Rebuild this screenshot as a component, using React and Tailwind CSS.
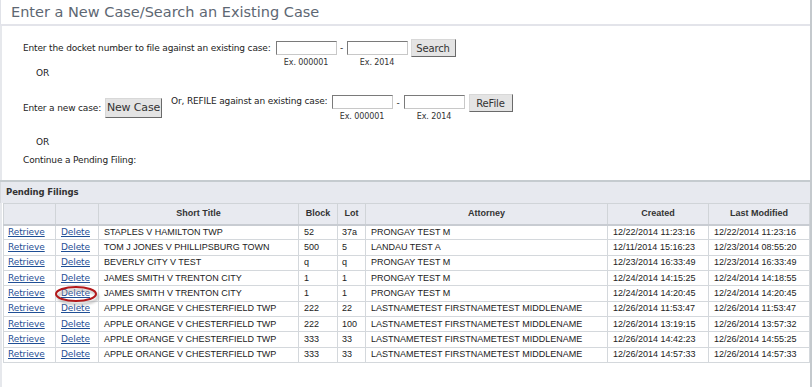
import React from "react";

const rows = [
  ["STAPLES V HAMILTON TWP", "52", "37a", "PRONGAY TEST M", "12/22/2014 11:23:16", "12/22/2014 11:23:16"],
  ["TOM J JONES V PHILLIPSBURG TOWN", "500", "5", "LANDAU TEST A", "12/11/2014 15:16:23", "12/23/2014 08:55:20"],
  ["BEVERLY CITY V TEST", "q", "q", "PRONGAY TEST M", "12/23/2014 16:33:49", "12/23/2014 16:33:49"],
  ["JAMES SMITH V TRENTON CITY", "1", "1", "PRONGAY TEST M", "12/24/2014 14:15:25", "12/24/2014 14:18:55"],
  ["JAMES SMITH V TRENTON CITY", "1", "1", "PRONGAY TEST M", "12/24/2014 14:20:45", "12/24/2014 14:20:45"],
  ["APPLE ORANGE V CHESTERFIELD TWP", "222", "22", "LASTNAMETEST FIRSTNAMETEST MIDDLENAME", "12/26/2014 11:53:47", "12/26/2014 11:53:47"],
  ["APPLE ORANGE V CHESTERFIELD TWP", "222", "100", "LASTNAMETEST FIRSTNAMETEST MIDDLENAME", "12/26/2014 13:19:15", "12/26/2014 13:57:32"],
  ["APPLE ORANGE V CHESTERFIELD TWP", "333", "33", "LASTNAMETEST FIRSTNAMETEST MIDDLENAME", "12/26/2014 14:42:23", "12/26/2014 14:55:25"],
  ["APPLE ORANGE V CHESTERFIELD TWP", "333", "33", "LASTNAMETEST FIRSTNAMETEST MIDDLENAME", "12/26/2014 14:57:33", "12/26/2014 14:57:33"],
];

function Field({ label }) {
  return (
    <div className="flex flex-col items-center">
      <div className="w-[61px] h-[14px] bg-white border border-t-[#7a7a7a] border-l-[#7a7a7a] border-b-[#c8c8c8] border-r-[#c8c8c8]" />
      <div className="mt-[3px] leading-[10px] text-[8px] tracking-[-0.1px] text-[#333]">{label}</div>
    </div>
  );
}

function Btn({ children, cls }) {
  return (
    <div
      className={
        "flex items-center justify-center bg-[#e4e4e4] border border-t-[#d8d8d8] border-l-[#d8d8d8] border-b-[#6a6a6a] border-r-[#6a6a6a] text-[#333] text-[10px] " +
        cls
      }
    >
      {children}
    </div>
  );
}

export default function App() {
  const dv = "font-['DejaVu_Sans',sans-serif]";
  return (
    <div className={"relative w-[812px] h-[387px] bg-white overflow-hidden " + dv}>
      <div className="w-[812px] h-[387px] border-r-2 border-[#c4c9cd] flex flex-col">
        {/* title */}
        <div className="h-[24px] border-l border-[#e0e2e8] pl-[10px] flex items-center text-[14.5px] text-[#5d6773] tracking-[0px] leading-none">
          Enter a New Case/Search an Existing Case
        </div>
        <div className="h-[2px] bg-[#e3e4ea]" />
        {/* form */}
        <div className="h-[154px] border-l-2 border-[#e6e8ec] pl-[21px] text-[9px] tracking-[-0.15px] text-[#222] flex flex-col">
          <div className="mt-[13px] flex items-start">
            <span className="leading-[18px]">Enter the docket number to file against an existing case:</span>
            <div className="ml-[5px] mt-[2px]">
              <Field label="Ex. 000001" />
            </div>
            <span className="w-[10px] text-center leading-[18px]">-</span>
            <div className="mt-[2px]">
              <Field label="Ex. 2014" />
            </div>
            <Btn cls="ml-[3px] w-[45px] h-[18px]">Search</Btn>
          </div>
          <div className="mt-[-1px] pl-[13px] leading-[12px]">OR</div>
          <div className="mt-[15px] flex items-start">
            <span className="mt-[4px] leading-[20px]">Enter a new case:</span>
            <Btn cls="ml-[4px] mt-[4px] w-[57px] h-[20px] text-[11px]">New Case</Btn>
            <span className="ml-[9px] mt-[1px] leading-[12px]">Or, REFILE against an existing case:</span>
            <div className="ml-[4px] mt-[1px]">
              <Field label="Ex. 000001" />
            </div>
            <span className="w-[11px] text-center leading-[18px]">-</span>
            <div className="mt-[1px]">
              <Field label="Ex. 2014" />
            </div>
            <Btn cls="ml-[4px] w-[44px] h-[18px]">ReFile</Btn>
          </div>
          <div className="mt-[14px] pl-[13px] leading-[12px]">OR</div>
          <div className="mt-[6px] leading-[12px]">Continue a Pending Filing:</div>
        </div>
        <div className="h-[2px] bg-[#c5cbcf]" />
        {/* pending filings band */}
        <div className="h-[21px] bg-[#e7e9ef] border-l border-[#d6d9de] pl-[5px] flex items-center text-[8.5px] font-bold text-[#333] tracking-[-0.1px]">
          Pending Filings
        </div>
        {/* table area */}
        <div className="flex-1 border-l-2 border-[#e6e8ec] pl-px">
          <table className="border-collapse table-fixed w-[806px] font-['Liberation_Sans',Arial,sans-serif] text-[9px] text-[#222]">
            <colgroup>
              <col className="w-[52px]" />
              <col className="w-[43px]" />
              <col className="w-[200px]" />
              <col className="w-[39px]" />
              <col className="w-[28px]" />
              <col className="w-[242px]" />
              <col className="w-[101px]" />
              <col className="w-[101px]" />
            </colgroup>
            <thead>
              <tr className="h-[21px] bg-[#e8eaf0] font-bold text-[#333]">
                <th className="border border-[#d0d4d8] border-b-2 border-b-[#c8ccd2]"></th>
                <th className="border border-[#d0d4d8] border-b-2 border-b-[#c8ccd2]"></th>
                <th className="border border-[#d0d4d8] border-b-2 border-b-[#c8ccd2] text-center">Short Title</th>
                <th className="border border-[#d0d4d8] border-b-2 border-b-[#c8ccd2] text-center">Block</th>
                <th className="border border-[#d0d4d8] border-b-2 border-b-[#c8ccd2] text-center">Lot</th>
                <th className="border border-[#d0d4d8] border-b-2 border-b-[#c8ccd2] text-center">Attorney</th>
                <th className="border border-[#d0d4d8] border-b-2 border-b-[#c8ccd2] text-center">Created</th>
                <th className="border border-[#d0d4d8] border-b-2 border-b-[#c8ccd2] text-center">Last Modified</th>
              </tr>
            </thead>
            <tbody>
              {rows.map((r, i) => (
                <tr key={i} className="h-[15.33px] leading-[13px]">
                  <td className="border border-[#d4d8dc] pl-[4px] p-0">
                    <span className={"text-[#1f4f95] underline decoration-[#1f4f95] text-[9px] tracking-[-0.1px] " + dv}>Retrieve</span>
                  </td>
                  <td className="border border-[#d4d8dc] pl-[5px] p-0">
                    <span className={"text-[#1f4f95] underline decoration-[#1f4f95] text-[9px] tracking-[-0.1px] " + dv}>Delete</span>
                  </td>
                  <td className="border border-[#d4d8dc] pl-[5px] p-0 whitespace-nowrap">{r[0]}</td>
                  <td className="border border-[#d4d8dc] pl-[5px] p-0">{r[1]}</td>
                  <td className="border border-[#d4d8dc] pl-[4px] p-0">{r[2]}</td>
                  <td className="border border-[#d4d8dc] pl-[5px] p-0 whitespace-nowrap">{r[3]}</td>
                  <td className="border border-[#d4d8dc] pl-[5px] p-0 whitespace-nowrap">{r[4]}</td>
                  <td className="border border-[#d4d8dc] pl-[5px] p-0 whitespace-nowrap">{r[5]}</td>
                </tr>
              ))}
            </tbody>
          </table>
        </div>
      </div>
      {/* annotation ellipse */}
      <svg className="absolute left-[52px] top-[284px]" width="52" height="24" viewBox="0 0 52 24">
        <defs>
          <filter id="blur" x="-20%" y="-40%" width="140%" height="180%">
            <feGaussianBlur stdDeviation="1.2" />
          </filter>
        </defs>
        <ellipse cx="26" cy="13" rx="20" ry="7" fill="none" stroke="#9a9a9a" strokeOpacity="0.55" strokeWidth="2.5" filter="url(#blur)" />
        <ellipse cx="24" cy="10" rx="20" ry="7" fill="none" stroke="#b3191b" strokeWidth="2" />
      </svg>
    </div>
  );
}
